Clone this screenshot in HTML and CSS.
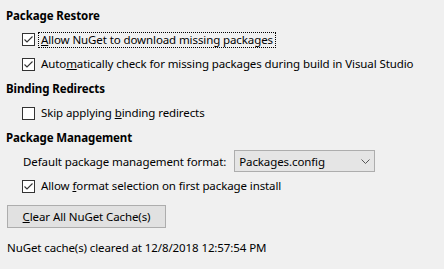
FILE: index.html
```html
<!DOCTYPE html>
<html>
<head>
<meta charset="utf-8">
<link rel="stylesheet" href="styles.css">
</head>
<body>
<div class="page">
  <div class="row heading">Package Restore</div>
  <div class="row r25 check-row">
    <span class="box"><svg width="11" height="11" viewBox="0 0 11 11"><polyline points="1.5,5.5 4,8 9.5,2.5" fill="none" stroke="#333" stroke-width="1.1"/></svg></span>
    <span class="label focus"><u>A</u>llow NuGet to download missing packages</span>
  </div>
  <div class="row check-row">
    <span class="box"><svg width="11" height="11" viewBox="0 0 11 11"><polyline points="1.5,5.5 4,8 9.5,2.5" fill="none" stroke="#333" stroke-width="1.1"/></svg></span>
    <span class="label">Auto<u>m</u>atically check for missing packages during build in Visual Studio</span>
  </div>
  <div class="row r25 heading">Binding Redirects</div>
  <div class="row check-row">
    <span class="box"></span>
    <span class="label">Skip applying <u>b</u>inding redirects</span>
  </div>
  <div class="row heading">Package Management</div>
  <div class="row format-row">
    <span class="format-label">Default package management format:</span>
    <div class="select">
      <span>Packages.config</span>
      <svg width="9" height="5" viewBox="0 0 9 5"><polyline points="0.5,0.5 4.5,4.5 8.5,0.5" fill="none" stroke="#555" stroke-width="1"/></svg>
    </div>
  </div>
  <div class="row r26 check-row">
    <span class="box"><svg width="11" height="11" viewBox="0 0 11 11"><polyline points="1.5,5.5 4,8 9.5,2.5" fill="none" stroke="#333" stroke-width="1.1"/></svg></span>
    <span class="label">Allow <u>f</u>ormat selection on first package install</span>
  </div>
  <button class="btn"><u>C</u>lear All NuGet Cache(s)</button>
  <div class="status">NuGet cache(s) cleared at 12/8/2018 12:57:54 PM</div>
</div>
</body>
</html>
```
FILE: styles.css
```css
html, body {
  margin: 0;
  padding: 0;
  background: #f0f0f0;
}
.page {
  padding: 3px 0 0 6px;
  font-family: "Noto Sans", sans-serif;
  font-size: 11.5px;
  letter-spacing: -0.1px;
  color: #000;
  display: flex;
  flex-direction: column;
  align-items: flex-start;
}
.row {
  height: 24px;
  display: flex;
  align-items: center;
}
.r25 { height: 25px; }
.r26 { height: 26px; }
.heading {
  font-weight: bold;
}
.check-row {
  padding-left: 16px;
}
.box {
  width: 11px;
  height: 11px;
  border: 1px solid #333;
  background: #fff;
  display: flex;
  align-items: center;
  justify-content: center;
}
.label {
  margin-left: 3px;
  padding: 0 2px;
  line-height: 14px;
  border: 1px solid transparent;
}
.focus {
  border: 1px dotted #000;
}
.format-row {
  padding-left: 17px;
}
.select {
  margin-left: 8px;
  height: 20px;
  border: 1px solid #adadad;
  background: #e5e5e5;
  display: flex;
  align-items: center;
  justify-content: space-between;
  padding: 0 4px 0 4px;
  width: 131px;
}
.btn {
  margin: 6px 0 0 1px;
  width: 159px;
  height: 23px;
  border: 1px solid #adadad;
  background: #e1e1e1;
  font-family: "Noto Sans", sans-serif;
  font-size: 11.5px;
  letter-spacing: -0.1px;
  color: #000;
  padding: 0;
}
.status {
  margin: 10px 0 0 1px;
  height: 20px;
  line-height: 20px;
}
```
